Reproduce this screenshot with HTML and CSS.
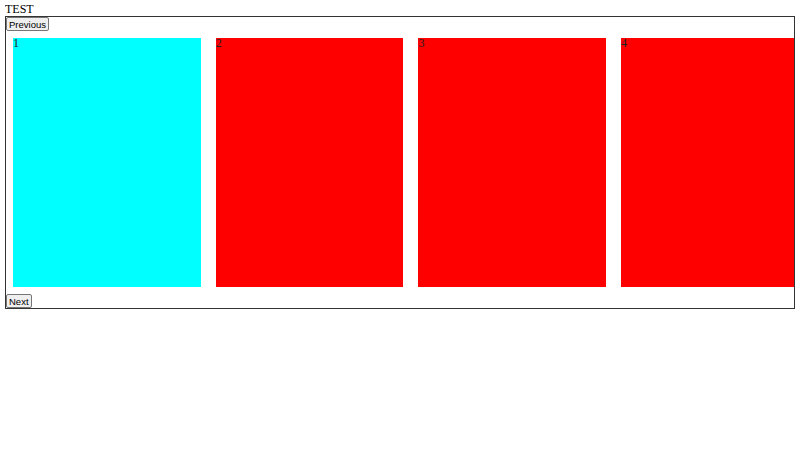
FILE: index.html
```html
<!DOCTYPE html>
<html>
<head>
<meta charset="utf-8">
<link rel="stylesheet" href="styles.css">
</head>
<body>
<div class="title">TEST</div>
<div class="carousel">
  <div class="controls"><button class="btn">Previous</button></div>
  <div class="track">
    <div class="slide active">1</div>
    <div class="slide">2</div>
    <div class="slide">3</div>
    <div class="slide">4</div>
  </div>
  <div class="controls"><button class="btn">Next</button></div>
</div>
</body>
</html>
```

FILE: styles.css
```css
html, body {
  background: #fff;
}
body {
  margin: 3px 5px 0;
  font-family: "Liberation Serif", serif;
  font-size: 12px;
  color: #000;
}
.title {
  line-height: 13px;
  height: 13px;
}
.carousel {
  border: 1px solid #333;
  overflow: hidden;
}
.controls {
  display: flex;
  height: 14px;
}
.btn {
  font-family: "Liberation Sans", Arial, sans-serif;
  font-size: 9.5px;
  line-height: 11px;
  height: 14px;
  padding: 0 2px;
  margin: 0;
  border: 1px solid #767676;
  border-radius: 2px;
  background: #efefef;
  color: #000;
}
.track {
  display: flex;
  gap: 15.2px;
  padding: 7px 7px;
  overflow: hidden;
}
.slide {
  flex: 0 0 187.5px;
  height: 249px;
  background: #ff0000;
  font-size: 12px;
  line-height: 10px;
  color: #222;
}
.slide.active {
  background: #00ffff;
}
```
